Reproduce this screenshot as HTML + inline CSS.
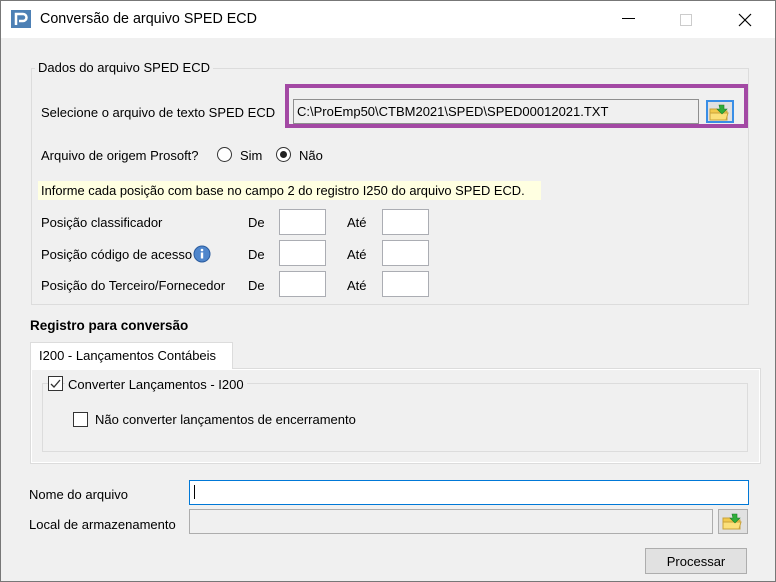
<!DOCTYPE html>
<html><head><meta charset="utf-8"><style>
*{box-sizing:border-box;margin:0;padding:0}
body{width:776px;height:582px;background:#f0f0f0;font-family:"Liberation Sans",sans-serif;font-size:13px;color:#000;position:relative;overflow:hidden}
.a{position:absolute;white-space:nowrap}
.win{position:absolute;left:0;top:0;width:776px;height:582px;border:1px solid #777}
.title{position:absolute;left:1px;top:1px;width:774px;height:37px;background:#fff}
.inp{position:absolute;background:#fff;border:1px solid #abadb3}
.gb{position:absolute;border:1px solid #dcdcdc}
.leg{position:absolute;background:#f0f0f0;padding:0 3px}
</style></head><body>
<div class="win"></div>
<div class="title"></div>
<svg class="a" style="left:11px;top:10px" width="20" height="18"><rect width="20" height="18" fill="#4d80b5"/><path d="M5 15V4h7a3.5 3.5 0 0 1 0 7H8" stroke="#fff" stroke-width="2.5" fill="none"/></svg>
<div class="a" style="left:40px;top:11px;font-size:14.3px">Conversão de arquivo SPED ECD</div>
<div class="a" style="left:622px;top:18px;width:13px;height:1px;background:#000"></div>
<div class="a" style="left:680px;top:14px;width:12px;height:12px;border:1px solid #ccc"></div>
<svg class="a" style="left:738px;top:13px" width="14" height="14"><path d="M1 1L13 13M13 1L1 13" stroke="#000" stroke-width="1.2"/></svg>

<div class="gb" style="left:31px;top:68px;width:718px;height:237px"></div>
<div class="leg" style="left:35px;top:60px">Dados do arquivo SPED ECD</div>
<div class="a" style="left:41px;top:105px">Selecione o arquivo de texto SPED ECD</div>
<div class="a" style="left:285px;top:84px;width:463px;height:44px;border:4px solid #a349a4"></div>
<div class="a" style="left:293px;top:99px;width:406px;height:25px;border:1px solid #8f8f8f;background:#f0f0f0;padding:4px 0 0 3px">C:\ProEmp50\CTBM2021\SPED\SPED00012021.TXT</div>
<div class="a" style="left:706px;top:100px;width:28px;height:23px;border:2px solid #3a8ee6;background:#e1e1e1"></div>
<svg class="a" style="left:709px;top:103px" width="22" height="18"><path d="M1 6h7l2 2h8v9H1z" fill="#f2c94c" stroke="#c9a23a"/><path d="M1 10h18l-2 7H1z" fill="#fbe07a" stroke="#c9a23a"/><path d="M10 2h5v4h3l-5 5-5-5h3z" fill="#2fae3a" stroke="#1f7d28" stroke-width=".6"/></svg>

<div class="a" style="left:41px;top:148px">Arquivo de origem Prosoft?</div>
<div class="a" style="left:217px;top:147px;width:15px;height:15px;border-radius:50%;border:1px solid #333;background:#fff"></div>
<div class="a" style="left:240px;top:148px">Sim</div>
<div class="a" style="left:276px;top:147px;width:15px;height:15px;border-radius:50%;border:1px solid #333;background:#fff"></div>
<div class="a" style="left:280px;top:151px;width:7px;height:7px;border-radius:50%;background:#222"></div>
<div class="a" style="left:299px;top:148px">Não</div>

<div class="a" style="left:38px;top:181px;width:503px;height:19px;background:#ffffe1"></div>
<div class="a" style="left:41px;top:183px;font-size:12.9px">Informe cada posição com base no campo 2 do registro I250 do arquivo SPED ECD.</div>

<div class="a" style="left:41px;top:215px">Posição classificador</div>
<div class="a" style="left:41px;top:247px">Posição código de acesso</div>
<svg class="a" style="left:193px;top:245px" width="18" height="18"><circle cx="9" cy="9" r="8" fill="#4f86cc" stroke="#2b5c9e"/><circle cx="9" cy="5" r="1.3" fill="#fff"/><rect x="7.8" y="7.5" width="2.4" height="6" fill="#fff"/></svg>
<div class="a" style="left:41px;top:278px">Posição do Terceiro/Fornecedor</div>
<div class="a" style="left:248px;top:215px">De</div><div class="a" style="left:347px;top:215px">Até</div>
<div class="a" style="left:248px;top:247px">De</div><div class="a" style="left:347px;top:247px">Até</div>
<div class="a" style="left:248px;top:278px">De</div><div class="a" style="left:347px;top:278px">Até</div>
<div class="inp" style="left:279px;top:209px;width:47px;height:26px"></div><div class="inp" style="left:382px;top:209px;width:47px;height:26px"></div>
<div class="inp" style="left:279px;top:240px;width:47px;height:26px"></div><div class="inp" style="left:382px;top:240px;width:47px;height:26px"></div>
<div class="inp" style="left:279px;top:271px;width:47px;height:26px"></div><div class="inp" style="left:382px;top:271px;width:47px;height:26px"></div>

<div class="a" style="left:30px;top:318px;font-weight:bold;font-size:13.5px">Registro para conversão</div>
<div class="a" style="left:30px;top:368px;width:731px;height:96px;border:1px solid #dcdcdc;background:#f0f0f0;box-shadow:inset 0 0 0 1px #fff"></div>
<div class="a" style="left:30px;top:342px;width:203px;height:27px;border:1px solid #dcdcdc;border-bottom:none;background:#fff;padding:5px 0 0 8px">I200 - Lançamentos Contábeis</div>
<div class="gb" style="left:42px;top:383px;width:706px;height:69px"></div>
<div class="a" style="left:48px;top:376px;width:15px;height:15px;border:1px solid #333;background:#fff"></div>
<svg class="a" style="left:49px;top:377px" width="13" height="13"><path d="M2 7l3 3 6-7" stroke="#333" stroke-width="1.3" fill="none"/></svg>
<div class="leg" style="left:65px;top:377px;padding:0 3px">Converter Lançamentos - I200</div>
<div class="a" style="left:73px;top:412px;width:15px;height:15px;border:1px solid #333;background:#fff"></div>
<div class="a" style="left:95px;top:412px">Não converter lançamentos de encerramento</div>

<div class="a" style="left:29px;top:487px">Nome do arquivo</div>
<div class="a" style="left:189px;top:480px;width:560px;height:25px;border:1px solid #0078d7;background:#fff"></div>
<div class="a" style="left:194px;top:485px;width:1px;height:14px;background:#000"></div>
<div class="a" style="left:29px;top:517px">Local de armazenamento</div>
<div class="a" style="left:189px;top:509px;width:524px;height:25px;border:1px solid #adadad;background:#f0f0f0"></div>
<div class="a" style="left:718px;top:509px;width:30px;height:25px;border:1px solid #adadad;background:#e1e1e1"></div>
<svg class="a" style="left:722px;top:512px" width="22" height="18"><path d="M1 6h7l2 2h8v9H1z" fill="#f2c94c" stroke="#c9a23a"/><path d="M1 10h18l-2 7H1z" fill="#fbe07a" stroke="#c9a23a"/><path d="M10 2h5v4h3l-5 5-5-5h3z" fill="#2fae3a" stroke="#1f7d28" stroke-width=".6"/></svg>
<div class="a" style="left:645px;top:548px;width:102px;height:26px;border:1px solid #adadad;background:#e1e1e1;text-align:center;padding-top:5px">Processar</div>
</body></html>
